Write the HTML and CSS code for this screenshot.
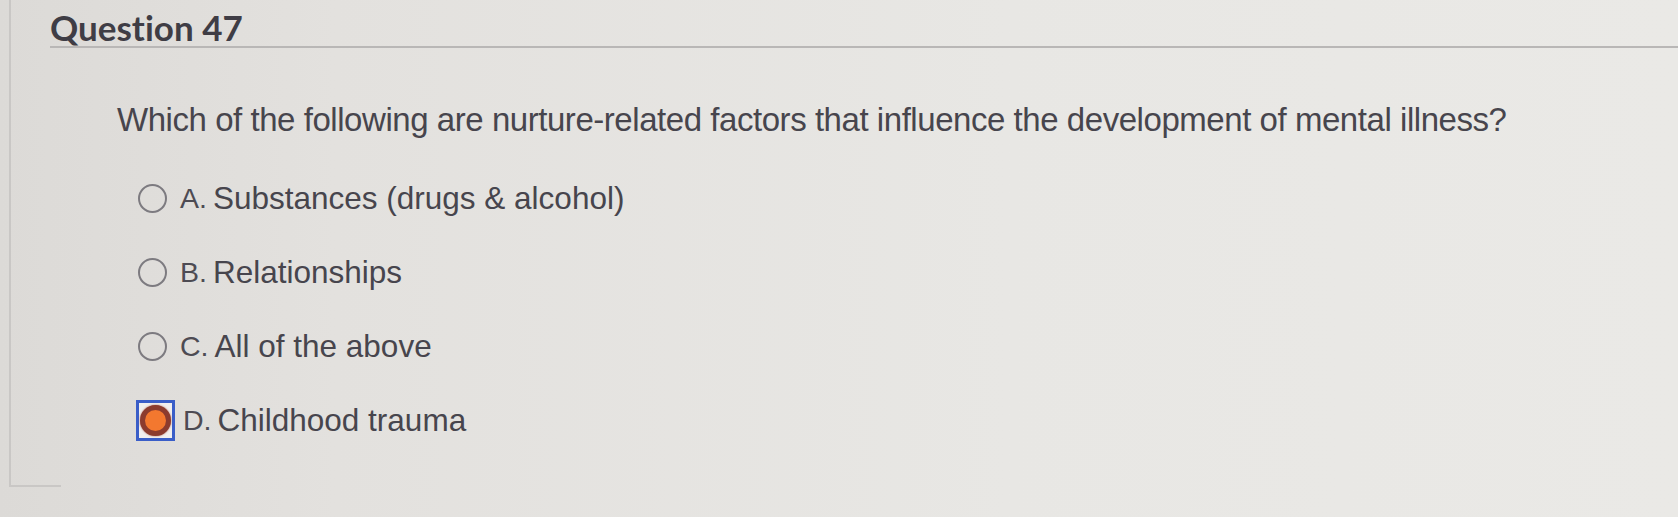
FILE: index.html
```html
<!DOCTYPE html>
<html>
<head>
<meta charset="utf-8">
<link rel="stylesheet" href="styles.css">
</head>
<body>
<div class="frame">
  <div class="question">
    <h2 class="q-title">Question 47</h2>
    <div class="q-body">
      <p class="q-text">Which of the following are nurture-related factors that influence the development of mental illness?</p>
      <div class="options">
        <div class="opt"><span class="radio"></span><span class="letter">A.</span><span class="label">Substances (drugs &amp; alcohol)</span></div>
        <div class="opt"><span class="radio"></span><span class="letter">B.</span><span class="label">Relationships</span></div>
        <div class="opt"><span class="radio"></span><span class="letter">C.</span><span class="label">All of the above</span></div>
        <div class="opt"><span class="radio-wrap"><span class="radio checked"></span></span><span class="letter">D.</span><span class="label">Childhood trauma</span></div>
      </div>
    </div>
  </div>
</div>
</body>
</html>
```
FILE: styles.css
```css
html, body {
  margin: 0;
  padding: 0;
}
body {
  width: 1678px;
  height: 517px;
  overflow: hidden;
  background: linear-gradient(90deg, #dcdad7 0%, #e3e1de 20%, #e8e7e4 60%, #eae9e6 100%);
  font-family: "Liberation Sans", Arial, sans-serif;
  color: #47454d;
}
.frame {
  margin-left: 9px;
  height: 487px;
  border-left: 2px solid #c9c7c5;
  position: relative;
}
.frame::after {
  content: "";
  position: absolute;
  left: 0;
  bottom: 0;
  width: 50px;
  height: 2px;
  background: #c9c7c5;
}
.question {
  padding-left: 39px;
}
.q-title {
  margin: 0;
  padding-top: 7px;
  height: 39px;
  font-family: Lato, "Open Sans", sans-serif;
  font-weight: 700;
  font-size: 35px;
  line-height: 40px;
  color: #3f3d45;
  font-variant-ligatures: none;
  border-bottom: 2px solid #b9b7b6;
}
.q-body {
  padding-left: 67px;
}
.q-text {
  margin: 54px 0 0 0;
  font-size: 33px;
  line-height: 36px;
  letter-spacing: -0.45px;
}
.options {
  margin-top: 43px;
  display: flex;
  flex-direction: column;
  gap: 40px;
}
.opt {
  display: flex;
  align-items: center;
  height: 34px;
  font-size: 31.5px;
}
.radio {
  width: 25px;
  height: 25px;
  border: 2px solid #7d7b80;
  border-radius: 50%;
  margin-left: 21px;
  margin-right: 13px;
  flex: none;
}
.radio-wrap {
  margin-left: 19px;
  margin-right: 8px;
  width: 33px;
  height: 35px;
  border: 3px solid #3a5ec8;
  background: #f1efee;
  display: flex;
  align-items: center;
  justify-content: center;
  flex: none;
}
.radio.checked {
  margin: 0;
  width: 21px;
  height: 21px;
  border: 5px solid #8b3b2e;
  background: #f3782f;
  box-shadow: 0 0 2px #b06050;
}
.letter {
  font-size: 28.5px;
  margin-right: 6px;
  color: #4d4b53;
}
```
